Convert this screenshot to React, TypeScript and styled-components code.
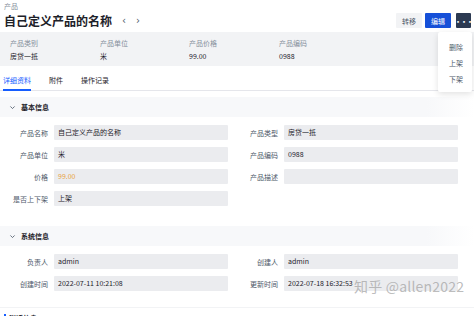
import React from "react";
import styled, { createGlobalStyle } from "styled-components";

const Global = createGlobalStyle`
  html, body {
    margin: 0;
    padding: 0;
    background: #fff;
    font-family: "Noto Sans CJK SC", "Noto Sans", sans-serif;
    color: #1d2129;
  }
`;

const Page = styled.div`
  position: relative;
  width: 474px;
  height: 316px;
  overflow: hidden;
`;

const Header = styled.div`
  display: flex;
  justify-content: space-between;
  align-items: flex-end;
  padding: 2px 3px 0 4px;
  height: 30px;
  box-sizing: border-box;
`;

const Crumb = styled.div`
  font-size: 7px;
  color: #86909c;
  line-height: 9px;
`;

const TitleRow = styled.div`
  display: flex;
  align-items: center;
  gap: 10px;
`;

const Title = styled.h1`
  margin: 0;
  font-size: 12px;
  font-weight: 700;
  line-height: 19px;
  color: #1d2129;
`;

const Arrow = styled.span`
  font-size: 10px;
  color: #4e5969;
  font-family: "DejaVu Sans", sans-serif;
  line-height: 12px;
`;

const Actions = styled.div`
  display: flex;
  gap: 3px;
  align-items: center;
  margin-bottom: 2px;
`;

const Btn = styled.button<{ $kind: "ghost" | "primary" | "dark" }>`
  border: none;
  height: 15px;
  padding: 0 ${(p) => (p.$kind === "dark" ? "0" : "6px")};
  width: ${(p) => (p.$kind === "dark" ? "15px" : "auto")};
  justify-content: center;
  font-size: 7px;
  font-family: inherit;
  font-weight: ${(p) => (p.$kind === "dark" ? 700 : 400)};
  border-radius: 1px;
  background: ${(p) =>
    p.$kind === "primary" ? "#1650d8" : p.$kind === "dark" ? "#2c3a52" : "#f2f3f5"};
  color: ${(p) => (p.$kind === "ghost" ? "#4e5969" : "#fff")};
  margin-left: ${(p) => (p.$kind === "dark" ? "2px" : "0")};
  display: flex;
  align-items: center;
  letter-spacing: ${(p) => (p.$kind === "dark" ? "-1px" : "0")};
`;

const InfoBar = styled.div`
  margin-top: 2px;
  height: 34px;
  background: #f2f3f5;
  display: grid;
  grid-template-columns: 90px 89px 90px 90px;
  padding: 6px 10px 0;
  box-sizing: border-box;
`;

const InfoLabel = styled.div`
  font-size: 7px;
  color: #86909c;
  line-height: 10px;
`;

const InfoValue = styled.div`
  font-size: 7px;
  color: #1d2129;
  line-height: 10px;
  margin-top: 3px;
`;

const Tabs = styled.div`
  display: flex;
  gap: 18px;
  margin-top: 5px;
  padding-left: 3px;
  border-bottom: 1px solid #e5e6eb;
  height: 20px;
  box-sizing: border-box;
`;

const Tab = styled.div<{ $active?: boolean }>`
  font-size: 7px;
  line-height: 14px;
  padding-top: 2px;
  color: ${(p) => (p.$active ? "#165dff" : "#1d2129")};
  border-bottom: 2px solid ${(p) => (p.$active ? "#165dff" : "transparent")};
  margin-bottom: -1px;
`;

const SectionHead = styled.div<{ $top: number }>`
  margin-top: ${(p) => p.$top}px;
  height: 20px;
  background: linear-gradient(90deg, #f7f8fa 0%, #f7f8fa 90%, #fff 100%);
  display: flex;
  align-items: center;
  gap: 5px;
  padding-left: 9px;
  font-size: 7px;
  font-weight: 700;
  color: #1d2129;
`;

const Grid = styled.div`
  display: grid;
  grid-template-columns: 230px 230px;
  row-gap: 7px;
  margin-top: 8px;
`;

const Field = styled.div`
  display: flex;
  align-items: center;
  gap: 6px;
  height: 15px;
`;

const Label = styled.div`
  width: 48px;
  text-align: right;
  font-size: 7px;
  line-height: 10px;
  color: #4e5969;
  white-space: nowrap;
`;

const Input = styled.div<{ $accent?: boolean }>`
  width: 174px;
  height: 15px;
  background: #ebecef;
  border-radius: 1px;
  box-sizing: border-box;
  padding-left: 4px;
  font-size: 7px;
  line-height: 15px;
  color: ${(p) => (p.$accent ? "#e8a23a" : "#1d2129")};
`;

const Footer = styled.div`
  margin-top: 16px;
  display: flex;
  align-items: center;
  gap: 3px;
  padding-left: 4px;
  font-size: 7px;
  line-height: 10px;
  font-weight: 700;
  border-top: 1px solid #f2f3f5;
  padding-top: 5px;
`;

const Bar = styled.span`
  width: 2px;
  height: 8px;
  background: #165dff;
`;

const Menu = styled.div`
  position: absolute;
  left: 438px;
  top: 32px;
  width: 34px;
  height: 60px;
  background: #fff;
  box-shadow: 0 2px 6px rgba(0, 0, 0, 0.12);
  border-radius: 2px;
  display: flex;
  flex-direction: column;
  justify-content: center;
  gap: 6px;
  padding-top: 2px;
  box-sizing: border-box;
`;

const MenuItem = styled.div`
  font-size: 7px;
  color: #4e5969;
  text-align: center;
  line-height: 10px;
  padding-left: 2px;
`;

const Watermark = styled.div`
  position: absolute;
  left: 354px;
  top: 276px;
  font-size: 14px;
  color: rgba(160, 160, 160, 0.7);
  font-family: "Noto Sans CJK SC", "Noto Sans", sans-serif;
  letter-spacing: 0.2px;
`;

const Chevron = () => (
  <svg width="7" height="7" viewBox="0 0 10 10">
    <path d="M2 3.5 L5 6.5 L8 3.5" fill="none" stroke="#4e5969" strokeWidth="1.2" />
  </svg>
);

const info = [
  ["产品类别", "房贷一抵"],
  ["产品单位", "米"],
  ["产品价格", "99.00"],
  ["产品编码", "0988"],
];

const basic: { label: string; value: string; accent?: boolean }[] = [
  { label: "产品名称", value: "自己定义产品的名称" },
  { label: "产品类型", value: "房贷一抵" },
  { label: "产品单位", value: "米" },
  { label: "产品编码", value: "0988" },
  { label: "价格", value: "99.00", accent: true },
  { label: "产品描述", value: "" },
  { label: "是否上下架", value: "上架" },
];

const system = [
  { label: "负责人", value: "admin" },
  { label: "创建人", value: "admin" },
  { label: "创建时间", value: "2022-07-11 10:21:08" },
  { label: "更新时间", value: "2022-07-18 16:32:53" },
];

export default function App() {
  return (
    <Page>
      <Global />
      <Header>
        <div>
          <Crumb>产品</Crumb>
          <TitleRow>
            <Title>自己定义产品的名称</Title>
            <Arrow>‹</Arrow>
            <Arrow>›</Arrow>
          </TitleRow>
        </div>
        <Actions>
          <Btn $kind="ghost">转移</Btn>
          <Btn $kind="primary">编辑</Btn>
          <Btn $kind="dark">···</Btn>
        </Actions>
      </Header>

      <InfoBar>
        {info.map(([l, v]) => (
          <div key={l}>
            <InfoLabel>{l}</InfoLabel>
            <InfoValue>{v}</InfoValue>
          </div>
        ))}
      </InfoBar>

      <Tabs>
        <Tab $active>详细资料</Tab>
        <Tab>附件</Tab>
        <Tab>操作记录</Tab>
      </Tabs>

      <SectionHead $top={6}>
        <Chevron />
        基本信息
      </SectionHead>
      <Grid>
        {basic.map((f) => (
          <Field key={f.label}>
            <Label>{f.label}</Label>
            <Input $accent={f.accent}>{f.value}</Input>
          </Field>
        ))}
      </Grid>

      <SectionHead $top={20}>
        <Chevron />
        系统信息
      </SectionHead>
      <Grid>
        {system.map((f) => (
          <Field key={f.label}>
            <Label>{f.label}</Label>
            <Input>{f.value}</Input>
          </Field>
        ))}
      </Grid>

      <Footer>
        <Bar />
        附近信息
      </Footer>

      <Menu>
        <MenuItem>删除</MenuItem>
        <MenuItem>上架</MenuItem>
        <MenuItem>下架</MenuItem>
      </Menu>

      <Watermark>知乎 @allen2022</Watermark>
    </Page>
  );
}
